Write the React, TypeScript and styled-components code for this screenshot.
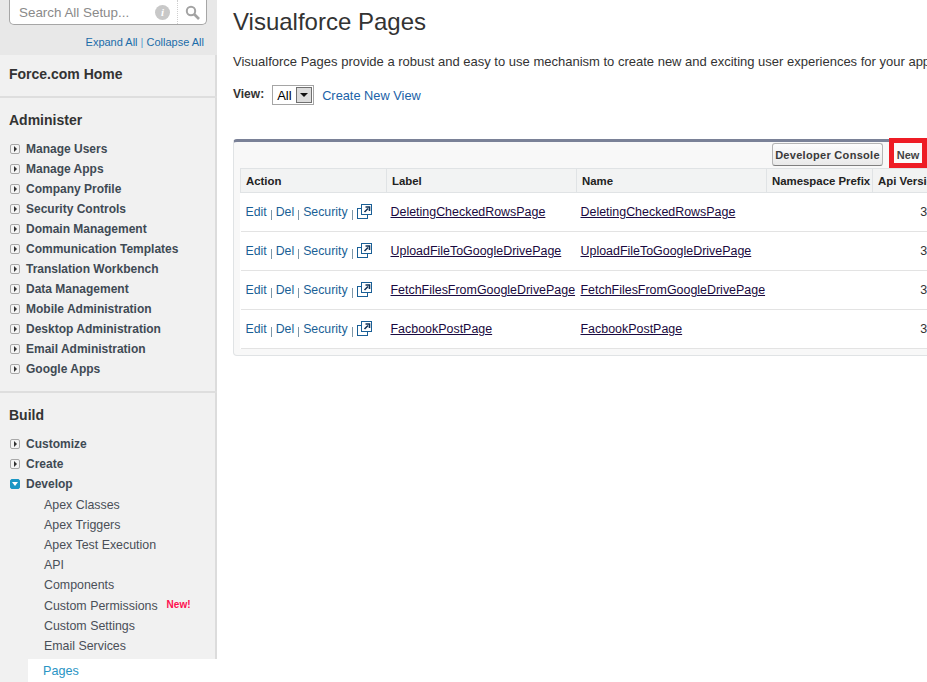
import React from "react"
import styled, { createGlobalStyle } from "styled-components"

const GlobalStyle = createGlobalStyle`
    html, body {
        margin: 0;
        padding: 0;
        width: 927px;
        height: 682px;
        overflow: hidden;
        background: #fff;
        font-family: "Liberation Sans", Arial, sans-serif;
    }
`

const Page = styled.div`
    display: flex;
    width: 927px;
    height: 682px;
    overflow: hidden;
`

const Sidebar = styled.aside`
    position: relative;
    flex: none;
    width: 217px;
    height: 682px;
    overflow: hidden;
    background: #f1f1f1;
    box-shadow: inset -2px 0 0 #dcdcdc;
`

const SearchArea = styled.div`
    height: 55px;
    box-sizing: border-box;
    padding: 0 10px 0 9px;
    background: #e8e8e8;
`

const SearchBox = styled.div`
    display: flex;
    align-items: center;
    height: 25px;
    box-sizing: border-box;
    background: #fff;
    border: 1px solid #a6a6a6;
    border-top: 0;
    border-radius: 0 0 5px 5px;
`

const SearchText = styled.span`
    flex: 1;
    padding-left: 9px;
    font-size: 13.4px;
    color: #8a8a8a;
`

const InfoDot = styled.span`
    display: flex;
    align-items: center;
    justify-content: center;
    width: 15px;
    height: 15px;
    margin-right: 7px;
    border-radius: 50%;
    background: #c8c8c8;
    color: #fff;
    font: italic bold 11px "Liberation Serif", serif;
`

const SearchButton = styled.span`
    display: flex;
    align-items: center;
    justify-content: center;
    width: 28px;
    height: 100%;
    border-left: 1px dotted #cfcfcf;
`

const ExpandLinks = styled.div`
    margin-top: 10px;
    padding-right: 3px;
    text-align: right;
    font-size: 11px;
    line-height: 14px;
    color: #1b6ca8;

    i {
        font-style: normal;
        color: #5aa0cf;
    }
`

const HomeBlock = styled.div`
    height: 43px;
    box-sizing: border-box;
    padding: 11px 9px 0;
    border-bottom: 2px solid #dedede;
    font-size: 14px;
    line-height: 17px;
    font-weight: bold;
    color: #333;
`

const Section = styled.section<{ $height: number }>`
    box-sizing: border-box;
    padding: 14px 0 0;
    height: ${(p) => p.$height}px;
`

const SectionDivider = styled.div`
    height: 2px;
    background: #dedede;
`

const SectionTitle = styled.h2`
    margin: 0 0 10px;
    padding-left: 9px;
    font-size: 14px;
    line-height: 17px;
    font-weight: bold;
    color: #333;
`

const NavRow = styled.div`
    display: flex;
    align-items: center;
    height: 20px;
    padding-left: 10px;
    font-size: 12px;
    font-weight: bold;
    color: #3f4a54;
`

const Toggle = styled.span<{ $open?: boolean }>`
    display: flex;
    align-items: center;
    justify-content: center;
    flex: none;
    width: 10px;
    height: 10px;
    margin-right: 6px;
    box-sizing: border-box;
    border-radius: 2px;
    border: 1px solid ${(p) => (p.$open ? "#1b97c4" : "#a8a8a8")};
    background: ${(p) => (p.$open ? "#1b97c4" : "#f4f4f4")};
`

const ChildList = styled.div`
    padding-top: 1px;
`

const ChildRow = styled.div`
    display: flex;
    align-items: center;
    height: 20.1px;
    padding-left: 44px;
    font-size: 12.4px;
    color: #4a4f58;
`

const NewBadge = styled.span`
    margin-left: 9px;
    margin-top: -2px;
    font-size: 10px;
    font-weight: bold;
    color: #ff0f4f;
`

const ActiveRow = styled.div`
    position: absolute;
    left: 28px;
    right: 0;
    top: 659px;
    height: 23px;
    padding-left: 15px;
    line-height: 24px;
    background: #fff;
    font-size: 12.6px;
    color: #2a94c4;
`

const Main = styled.main`
    flex: 1;
    min-width: 0;
    padding: 7px 0 0 16px;
    overflow: hidden;
`

const Title = styled.h1`
    margin: 0;
    font-size: 24px;
    line-height: 30px;
    font-weight: normal;
    color: #333;
    white-space: nowrap;
`

const Description = styled.p`
    margin: 17px 0 0;
    font-size: 13px;
    line-height: 16px;
    color: #333;
    white-space: nowrap;
`

const ViewRow = styled.div`
    display: flex;
    align-items: center;
    height: 22px;
    margin-top: 14px;
    font-size: 12px;
    color: #333;
`

const ViewLabel = styled.label`
    font-weight: bold;
    margin-right: 8px;
    margin-top: -2px;
`

const FakeSelect = styled.span`
    display: flex;
    align-items: center;
    justify-content: space-between;
    width: 42px;
    height: 20px;
    box-sizing: border-box;
    margin-right: 8px;
    padding: 1px 1px 1px 4px;
    border: 1px solid #a5a5a5;
    font-size: 13px;
    color: #000;
`

const SelectArrow = styled.span`
    display: flex;
    align-items: center;
    justify-content: center;
    width: 16px;
    height: 16px;
    box-sizing: border-box;
    border: 1px solid #707070;
    background: #dcdcdc;
`

const ViewLink = styled.a`
    font-size: 12.8px;
    color: #1a62a8;
`

const Panel = styled.div`
    width: 720px;
    height: 217px;
    box-sizing: border-box;
    margin-top: 33px;
    padding: 0 0 0 6px;
    background: #f8f8f8;
    border: 1px solid #e0e3e5;
    border-top: 3px solid #7a8197;
    border-radius: 4px;
`

const ButtonBar = styled.div`
    display: flex;
    align-items: flex-start;
    height: 26px;
    padding-left: 532px;
`

const Button = styled.button`
    flex: none;
    height: 23px;
    width: 111px;
    padding: 0;
    margin-top: 1px;
    border: 1px solid #b5b5b5;
    border-bottom-color: #7f7f7f;
    border-radius: 3px;
    background: linear-gradient(#fdfdfd, #e9e9e9);
    font: bold 11px "Liberation Sans", Arial, sans-serif;
    letter-spacing: 0.3px;
    color: #3a3a3a;
`

const NewHighlight = styled.span`
    display: flex;
    align-items: center;
    justify-content: center;
    flex: none;
    width: 38px;
    height: 30px;
    box-sizing: border-box;
    margin: -4px 0 0 6px;
    padding-top: 3px;
    border: 5px solid #ee1c25;
    background: #fbfbfb;
    font-size: 11px;
    font-weight: bold;
    color: #444;
`

const Table = styled.table`
    table-layout: fixed;
    width: 720px;
    border-collapse: collapse;
    font-size: 12.45px;
    background: #fff;
`

const HeadCell = styled.th`
    height: 24px;
    box-sizing: border-box;
    padding: 0 5px;
    text-align: left;
    font-size: 11.4px;
    font-weight: bold;
    color: #222;
    background: #f2f3f3;
    white-space: nowrap;
    overflow: hidden;
    border: 1px solid #e0e3e5;
    border-width: 1px 0 1px 1px;
`

const BodyCell = styled.td`
    height: 39px;
    box-sizing: border-box;
    padding: 0 0 0 4px;
    border-bottom: 1px solid #e3e3e3;
    color: #333;
    white-space: nowrap;
    overflow: hidden;
`

const VersionCell = styled(BodyCell)`
    text-align: right;
    padding-right: 16px;
`

const Actions = styled.div`
    display: flex;
    align-items: center;
    padding-left: 1px;
    margin-top: -1px;
    font-size: 12.3px;
`

const ActionLink = styled.a`
    color: #1a5f96;
`

const Sep = styled.span`
    flex: none;
    width: 1px;
    height: 10px;
    margin: 6px 4px 0 4px;
    background: #7d97a8;
`

const RecordLink = styled.a`
    color: #1a0a40;
    text-decoration: underline;
`

const NewWindowIcon = () => (
    <svg width="15" height="15" viewBox="0 0 15 15">
        <rect x="0.5" y="4.5" width="10" height="10" fill="#fff" stroke="#1a5f96" />
        <rect x="4.5" y="0.5" width="10" height="10" fill="#fff" stroke="#1a5f96" />
        <path d="M7.5 8 L11 4.5 M8.5 3 H12.5 V7" fill="none" stroke="#12345a" strokeWidth="1.6" />
    </svg>
)

const administer = [
    "Manage Users",
    "Manage Apps",
    "Company Profile",
    "Security Controls",
    "Domain Management",
    "Communication Templates",
    "Translation Workbench",
    "Data Management",
    "Mobile Administration",
    "Desktop Administration",
    "Email Administration",
    "Google Apps",
]

const developChildren = [
    "Apex Classes",
    "Apex Triggers",
    "Apex Test Execution",
    "API",
    "Components",
    "Custom Permissions",
    "Custom Settings",
    "Email Services",
]

const pages = [
    "DeletingCheckedRowsPage",
    "UploadFileToGoogleDrivePage",
    "FetchFilesFromGoogleDrivePage",
    "FacbookPostPage",
]

const NavItem = ({ label, open }: { label: string; open?: boolean }) => (
    <NavRow>
        <Toggle $open={open}>
            {open ? (
                <svg width="6" height="4" viewBox="0 0 6 4">
                    <path d="M0 0 H6 L3 4 Z" fill="#fff" />
                </svg>
            ) : (
                <svg width="3" height="6" viewBox="0 0 3 6">
                    <path d="M0 0 L3 3 L0 6 Z" fill="#333" />
                </svg>
            )}
        </Toggle>
        {label}
    </NavRow>
)

export default function App() {
    return (
        <Page>
            <GlobalStyle />
            <Sidebar>
                <SearchArea>
                    <SearchBox>
                        <SearchText>Search All Setup...</SearchText>
                        <InfoDot>i</InfoDot>
                        <SearchButton>
                            <svg width="15" height="15" viewBox="0 0 15 15">
                                <circle cx="6" cy="6" r="4.2" fill="none" stroke="#a3a3a3" strokeWidth="2" />
                                <path d="M9 9 L14 14" stroke="#a3a3a3" strokeWidth="2.6" />
                            </svg>
                        </SearchButton>
                    </SearchBox>
                    <ExpandLinks>
                        Expand All <i>|</i> Collapse All
                    </ExpandLinks>
                </SearchArea>
                <HomeBlock>Force.com Home</HomeBlock>
                <Section $height={293}>
                    <SectionTitle>Administer</SectionTitle>
                    {administer.map((label) => (
                        <NavItem key={label} label={label} />
                    ))}
                </Section>
                <SectionDivider />
                <Section $height={288}>
                    <SectionTitle>Build</SectionTitle>
                    <NavItem label="Customize" />
                    <NavItem label="Create" />
                    <NavItem label="Develop" open />
                    <ChildList>
                        {developChildren.map((label) => (
                            <ChildRow key={label}>
                                {label}
                                {label === "Custom Permissions" && <NewBadge>New!</NewBadge>}
                            </ChildRow>
                        ))}
                    </ChildList>
                </Section>
                <ActiveRow>Pages</ActiveRow>
            </Sidebar>
            <Main>
                <Title>Visualforce Pages</Title>
                <Description>
                    Visualforce Pages provide a robust and easy to use mechanism to create new and exciting user experiences for your application
                </Description>
                <ViewRow>
                    <ViewLabel>View:</ViewLabel>
                    <FakeSelect>
                        All
                        <SelectArrow>
                            <svg width="8" height="4" viewBox="0 0 8 4">
                                <path d="M0 0 H8 L4 4 Z" fill="#111" />
                            </svg>
                        </SelectArrow>
                    </FakeSelect>
                    <ViewLink>Create New View</ViewLink>
                </ViewRow>
                <Panel>
                    <ButtonBar>
                        <Button>Developer Console</Button>
                        <NewHighlight>New</NewHighlight>
                    </ButtonBar>
                    <Table>
                        <colgroup>
                            <col width="146" />
                            <col width="190" />
                            <col width="190" />
                            <col width="106" />
                            <col width="88" />
                        </colgroup>
                        <thead>
                            <tr>
                                <HeadCell>Action</HeadCell>
                                <HeadCell>Label</HeadCell>
                                <HeadCell>Name</HeadCell>
                                <HeadCell>Namespace Prefix</HeadCell>
                                <HeadCell>Api Version</HeadCell>
                            </tr>
                        </thead>
                        <tbody>
                            {pages.map((name) => (
                                <tr key={name}>
                                    <BodyCell>
                                        <Actions>
                                            <ActionLink>Edit</ActionLink>
                                            <Sep />
                                            <ActionLink>Del</ActionLink>
                                            <Sep />
                                            <ActionLink>Security</ActionLink>
                                            <Sep />
                                            <NewWindowIcon />
                                        </Actions>
                                    </BodyCell>
                                    <BodyCell>
                                        <RecordLink>{name}</RecordLink>
                                    </BodyCell>
                                    <BodyCell>
                                        <RecordLink>{name}</RecordLink>
                                    </BodyCell>
                                    <BodyCell />
                                    <VersionCell>33.0</VersionCell>
                                </tr>
                            ))}
                        </tbody>
                    </Table>
                </Panel>
            </Main>
        </Page>
    )
}
